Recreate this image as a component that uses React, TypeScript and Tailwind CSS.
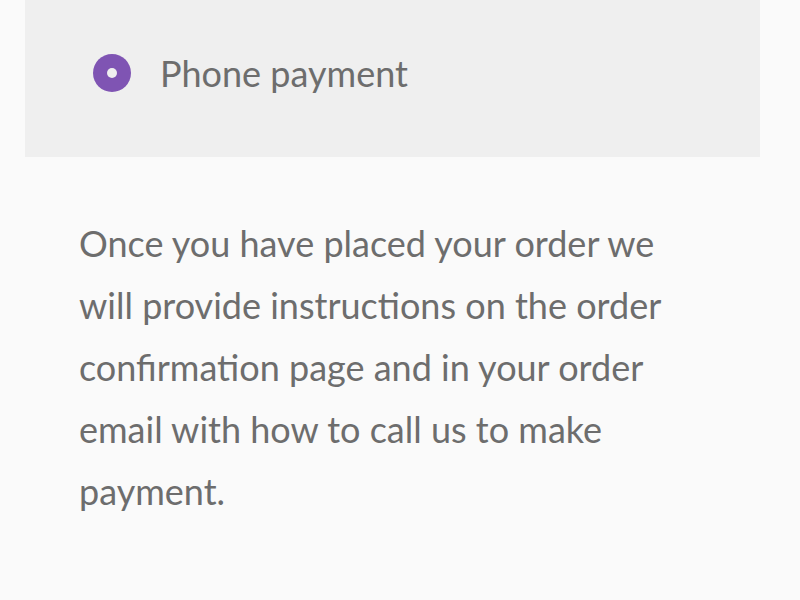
export default function App() {
  return (
    <div
      className="h-[600px] w-[800px] overflow-hidden bg-[#fafafa] text-[#6d6d6d]"
      style={{ fontFamily: "Lato, 'Open Sans', sans-serif" }}
    >
      {/* Selected payment method */}
      <div className="ml-[25px] flex h-[157px] w-[735px] items-start bg-[#efefef] pl-[68px] pt-[54px]">
        <span className="flex h-[38px] w-[38px] shrink-0 items-center justify-center rounded-full bg-[#7f54b3]">
          <span className="h-[10px] w-[10px] rounded-full bg-[#efefef]" />
        </span>
        <span className="ml-[29px] text-[36px] leading-[38px]">Phone payment</span>
      </div>

      {/* Method description */}
      <p className="mt-[55px] w-[685px] pl-[79px] text-[36px] leading-[62px]">
        Once you have placed your order we will provide instructions on the order confirmation
        page and in your order email with how to call us to make payment.
      </p>
    </div>
  );
}
